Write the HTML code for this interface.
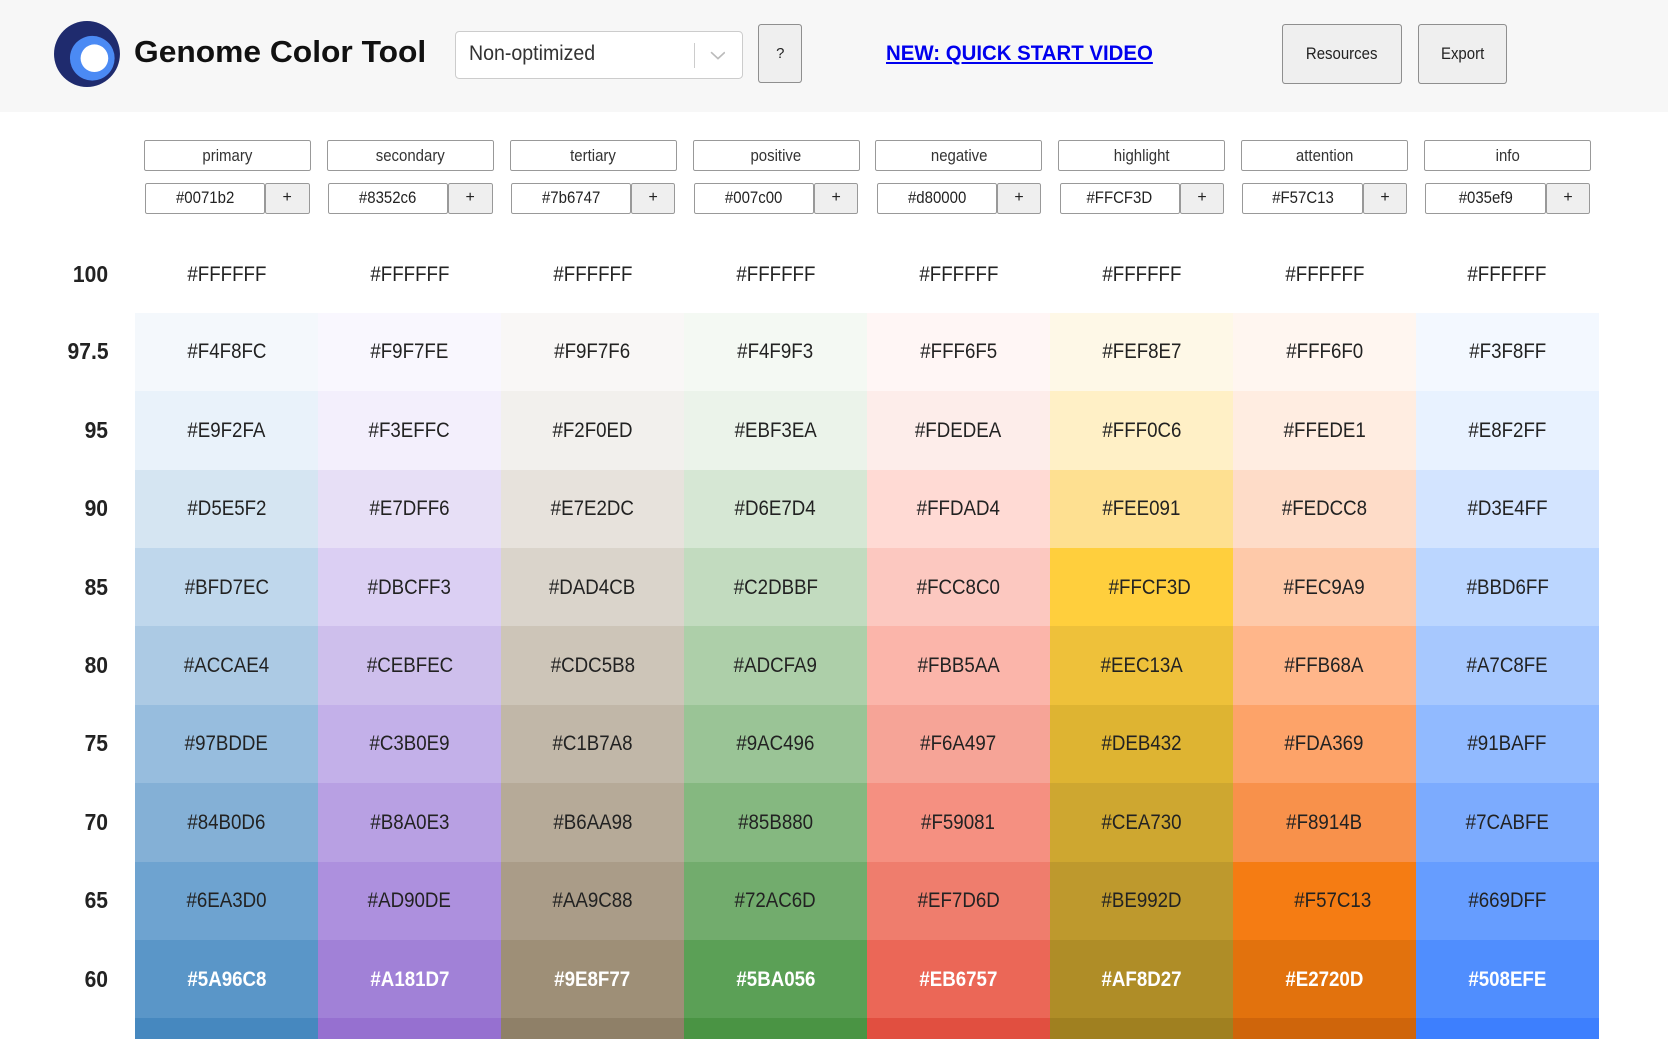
<!DOCTYPE html>
<html><head><meta charset="utf-8">
<style>
*{box-sizing:border-box;margin:0;padding:0}
html,body{width:1668px;height:1040px;overflow:hidden;background:#fff}
#root{width:1568px;height:977px;zoom:1.06378;position:relative;overflow:hidden;font-family:"Liberation Sans",sans-serif;color:#222}
.hdr{position:absolute;left:0;top:0;width:1568px;height:105px;background:#f7f7f7}
.abs{position:absolute}
.btn{position:absolute;background:#efefef;border:1px solid #8f8f8f;border-radius:3px;font-size:16px;color:#222;display:flex;align-items:center;justify-content:center}
.btn span,.lbl span,.hex span{display:inline-block;transform:scaleX(0.88)}
.lbl{position:absolute;top:132px;width:157px;height:29px;border:1px solid #999;border-radius:2px;font-size:16px;display:flex;align-items:center;justify-content:center;color:#333;background:#fff}
.hex{position:absolute;top:172px;width:113px;height:29px;border:1px solid #999;border-radius:2px;font-size:16px;display:flex;align-items:center;justify-content:center;color:#222;background:#fff}
.plus{position:absolute;top:172px;width:42px;height:29px;border:1px solid #999;border-radius:2px;font-size:15px;display:flex;align-items:center;justify-content:center;background:#efefef}
.row{position:absolute;left:0;height:73.7px;width:1568px}
.rl{position:absolute;left:0;width:102px;text-align:right;font-weight:bold;font-size:22px;top:0;height:100%;display:flex;align-items:center;justify-content:flex-end}
.rl span{display:inline-block;transform:scaleX(0.9);transform-origin:right}
.c{position:absolute;top:0;width:172px;height:100%;display:flex;align-items:center;justify-content:center;font-size:20px;color:#222}
.c span{display:inline-block;transform:scaleX(0.88)}
.w .c{color:#fff;font-weight:bold}
</style></head><body><div id="root">
<div class="hdr"></div>
<svg class="abs" style="left:51px;top:20px" width="64" height="64" viewBox="0 0 64 64">
<circle cx="31" cy="31" r="31" fill="#1f2b6e"/>
<circle cx="36" cy="35" r="21" fill="#4b8af4"/>
<circle cx="38" cy="35" r="13" fill="#fff"/>
</svg>
<div class="abs" style="left:126px;top:32px;font-size:29px;font-weight:bold;color:#111;transform:scaleX(1.03);transform-origin:left;white-space:nowrap">Genome Color Tool</div>
<div class="abs" style="left:428px;top:29px;width:270px;height:45px;background:#fff;border:1px solid #ccc;border-radius:4px"></div>
<div class="abs" style="left:441px;top:39px;font-size:20px;color:#333;transform:scaleX(0.92);transform-origin:left;white-space:nowrap">Non-optimized</div>
<div class="abs" style="left:652px;top:40px;width:1px;height:24px;background:#ccc"></div>
<svg class="abs" style="left:667px;top:46px" width="15" height="12" viewBox="0 0 15 12"><path d="M1 3 L7.5 9 L14 3" fill="none" stroke="#bbb" stroke-width="1.6"/></svg>
<div class="btn" style="left:713px;top:23px;width:41px;height:55px;font-size:14px">?</div>
<div class="abs" style="left:833px;top:39px;font-size:20px;font-weight:bold;color:#0000ee;text-decoration:underline;transform:scaleX(0.96);transform-origin:left;white-space:nowrap">NEW: QUICK START VIDEO</div>
<div class="btn" style="left:1205px;top:23px;width:113px;height:56px"><span>Resources</span></div>
<div class="btn" style="left:1333px;top:23px;width:84px;height:56px"><span>Export</span></div>

<div class="lbl" style="left:135px"><span>primary</span></div>
<div class="lbl" style="left:307px"><span>secondary</span></div>
<div class="lbl" style="left:479px"><span>tertiary</span></div>
<div class="lbl" style="left:651px"><span>positive</span></div>
<div class="lbl" style="left:823px"><span>negative</span></div>
<div class="lbl" style="left:995px"><span>highlight</span></div>
<div class="lbl" style="left:1167px"><span>attention</span></div>
<div class="lbl" style="left:1339px"><span>info</span></div>

<div class="hex" style="left:136px"><span>#0071b2</span></div><div class="plus" style="left:249px">+</div>
<div class="hex" style="left:308px"><span>#8352c6</span></div><div class="plus" style="left:421px">+</div>
<div class="hex" style="left:480px"><span>#7b6747</span></div><div class="plus" style="left:593px">+</div>
<div class="hex" style="left:652px"><span>#007c00</span></div><div class="plus" style="left:765px">+</div>
<div class="hex" style="left:824px"><span>#d80000</span></div><div class="plus" style="left:937px">+</div>
<div class="hex" style="left:996px"><span>#FFCF3D</span></div><div class="plus" style="left:1109px">+</div>
<div class="hex" style="left:1168px"><span>#F57C13</span></div><div class="plus" style="left:1281px">+</div>
<div class="hex" style="left:1340px"><span>#035ef9</span></div><div class="plus" style="left:1453px">+</div>

<div id="grid"></div>
<script>
var rows=[
["100",["FFFFFF","FFFFFF","FFFFFF","FFFFFF","FFFFFF","FFFFFF","FFFFFF","FFFFFF"]],
["97.5",["F4F8FC","F9F7FE","F9F7F6","F4F9F3","FFF6F5","FEF8E7","FFF6F0","F3F8FF"]],
["95",["E9F2FA","F3EFFC","F2F0ED","EBF3EA","FDEDEA","FFF0C6","FFEDE1","E8F2FF"]],
["90",["D5E5F2","E7DFF6","E7E2DC","D6E7D4","FFDAD4","FEE091","FEDCC8","D3E4FF"]],
["85",["BFD7EC","DBCFF3","DAD4CB","C2DBBF","FCC8C0","FFCF3D","FEC9A9","BBD6FF"]],
["80",["ACCAE4","CEBFEC","CDC5B8","ADCFA9","FBB5AA","EEC13A","FFB68A","A7C8FE"]],
["75",["97BDDE","C3B0E9","C1B7A8","9AC496","F6A497","DEB432","FDA369","91BAFF"]],
["70",["84B0D6","B8A0E3","B6AA98","85B880","F59081","CEA730","F8914B","7CABFE"]],
["65",["6EA3D0","AD90DE","AA9C88","72AC6D","EF7D6D","BE992D","F57C13","669DFF"]],
["60",["5A96C8","A181D7","9E8F77","5BA056","EB6757","AF8D27","E2720D","508EFE"]],
["",["4688BF","9670D0","8F8068","4A9444","E14F40","A08020","CF650B","3D7FFE"]]
];
var h='';
rows.forEach(function(r,i){
 var top=i==0?221:294+(i-1)*73.7;
 var hh=(i==10)?(977-top):73.7;
 h+='<div class="row'+(i>=9?' w':'')+'" style="top:'+top+'px;height:'+hh+'px"><div class="rl"><span>'+r[0]+'</span></div>';
 r[1].forEach(function(c,j){
  var pad='';
  if((i==4&&j==5)||(i==8&&j==6))pad='padding-left:16px;';
  h+='<div class="c" style="'+pad+'left:'+(127+j*172)+'px;background:#'+c+'">'+(i==10?'':'<span>#'+c+'</span>')+'</div>';
 });
 h+='</div>';
});
document.getElementById('grid').innerHTML=h;
</script>
</div></body></html>
